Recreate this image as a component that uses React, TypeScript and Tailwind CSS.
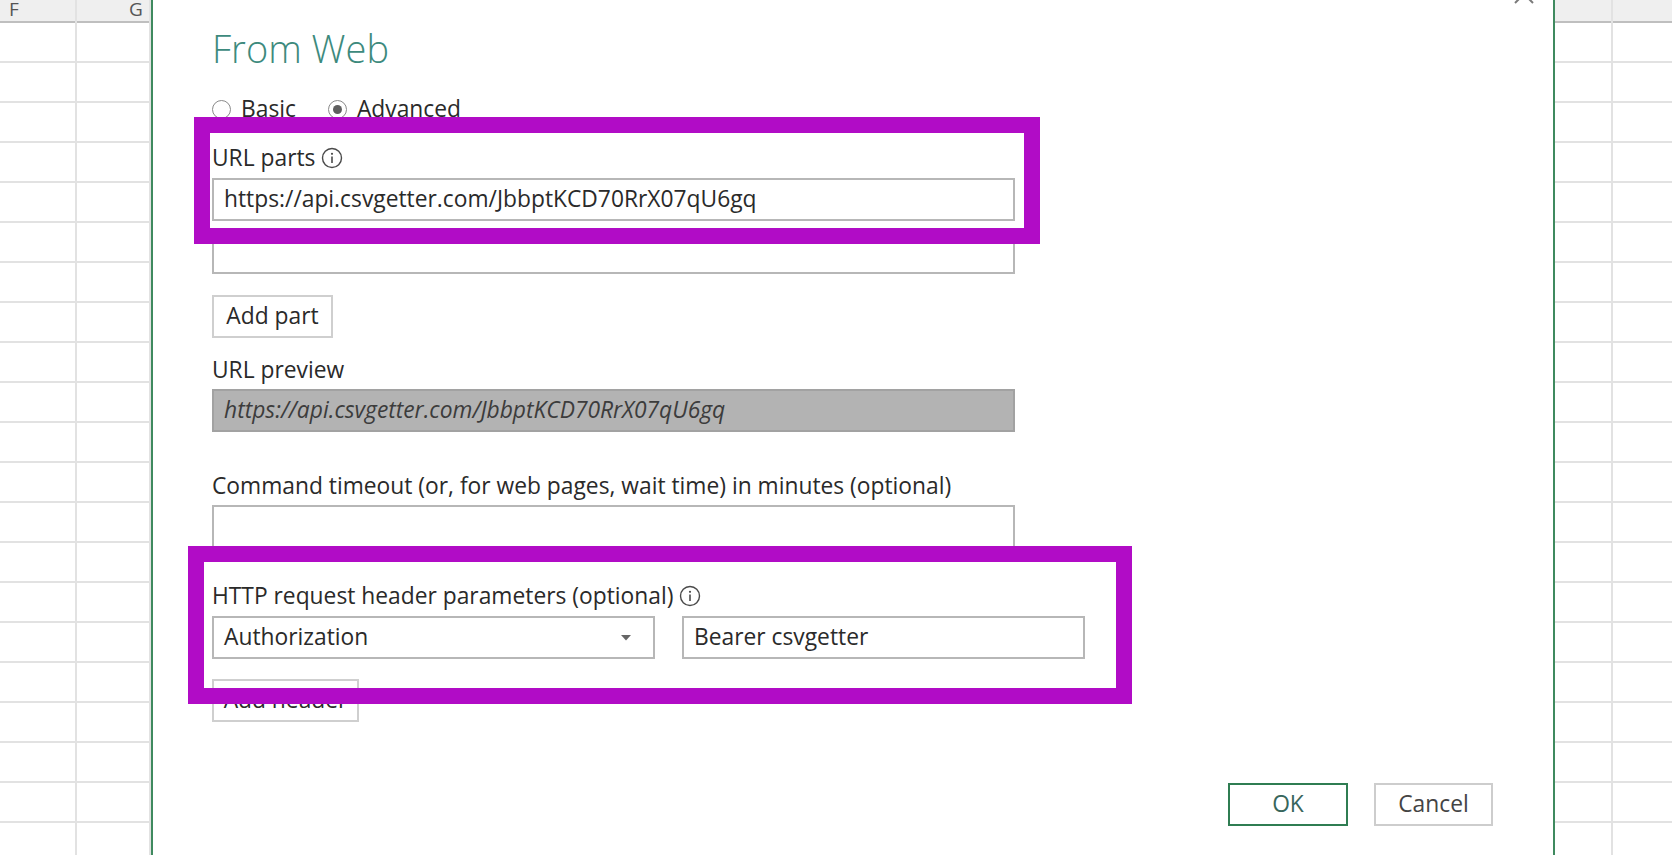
import React from "react";

const rows = Array.from({ length: 21 }, (_, i) => i);

function SheetStrip({ columns }: { columns: { label: string; width: string; pad: string }[] }) {
  return (
    <div className="flex shrink-0">
      {columns.map((col) => (
        <div key={col.label + col.width} className={`${col.width} border-r-2 border-[#e2e2e2]`}>
          <div className={`h-[23px] overflow-hidden border-b-2 border-[#bfbfbf] bg-[#efefef] text-[19px] leading-[19px] text-[#555] ${col.pad}`}>
            {col.label}
          </div>
          {rows.map((r) => (
            <div key={r} className="h-[40px] border-b-2 border-[#e2e2e2]" />
          ))}
        </div>
      ))}
    </div>
  );
}

function InfoIcon() {
  return (
    <svg width="22" height="22" viewBox="0 0 22 22" className="ml-[6px]">
      <circle cx="11" cy="11" r="9.5" fill="none" stroke="#4a4a4a" strokeWidth="1.4" />
      <circle cx="11" cy="6.8" r="1.1" fill="#4a4a4a" />
      <line x1="11" y1="9.5" x2="11" y2="16" stroke="#4a4a4a" strokeWidth="1.6" />
    </svg>
  );
}

function Radio({ checked, label }: { checked?: boolean; label: string }) {
  return (
    <div className="flex items-center">
      <span className="flex h-[19px] w-[19px] items-center justify-center rounded-full border-[1.5px] border-[#8a8a8a] bg-white">
        {checked && <span className="h-[9px] w-[9px] rounded-full bg-[#5f5f5f]" />}
      </span>
      <span className="ml-[10px]">{label}</span>
    </div>
  );
}

const inputCls = "h-[43px] border-2 border-[#b7b7b7] bg-white px-[10px] flex items-center";

export default function App() {
  return (
    <div className="flex h-[855px] w-[1672px] overflow-hidden bg-white font-['Open_Sans',sans-serif] text-[22.8px] text-[#2a2a2a]">
      <SheetStrip
        columns={[
          { label: "F", width: "w-[77px]", pad: "pl-[9px]" },
          { label: "G", width: "w-[74px]", pad: "pl-[52px]" },
        ]}
      />

      <div className="relative w-[1404px] shrink-0 border-x-2 border-[#3f8a5f] bg-white pl-[59px] pr-[60px]">
        {/* close glyph, mostly scrolled off the top */}
        <svg width="22" height="22" viewBox="0 0 22 22" className="absolute left-[1360px] top-[-17px]">
          <line x1="2" y1="2" x2="20" y2="20" stroke="#7a7a7a" strokeWidth="2" />
          <line x1="20" y1="2" x2="2" y2="20" stroke="#7a7a7a" strokeWidth="2" />
        </svg>

        <h1 className="mt-[25px] text-[38px] font-light leading-[46px] text-[#3d8a7d]">From Web</h1>

        <div className="mt-[23px] flex h-[30px] items-center gap-[32px]">
          <Radio label="Basic" />
          <Radio label="Advanced" checked />
        </div>

        <div className="mt-[19px] flex h-[30px] items-center">
          URL parts <InfoIcon />
        </div>
        <div className={`mt-[5px] w-[803px] ${inputCls}`}>https://api.csvgetter.com/JbbptKCD70RrX07qU6gq</div>
        <div className={`mt-[10px] w-[803px] ${inputCls}`} />

        <button className="mt-[21px] flex h-[43px] w-[121px] items-center justify-center border-2 border-[#cfcfcf] bg-white">
          Add part
        </button>

        <div className="mt-[17px] flex h-[30px] items-center">URL preview</div>
        <div className="mt-[4px] flex h-[43px] w-[803px] items-center border-2 border-[#a2a2a2] bg-[#b3b3b3] px-[10px] italic text-[#3c3c3c]">
          https://api.csvgetter.com/JbbptKCD70RrX07qU6gq
        </div>

        <div className="mt-[39px] flex h-[30px] items-center">
          Command timeout (or, for web pages, wait time) in minutes (optional)
        </div>
        <div className={`mt-[4px] w-[803px] ${inputCls}`} />

        <div className="mt-[33px] flex h-[30px] items-center">
          HTTP request header parameters (optional) <InfoIcon />
        </div>
        <div className="mt-[5px] flex gap-[27px]">
          <div className={`w-[443px] justify-between ${inputCls}`}>
            <span>Authorization</span>
            <svg width="10" height="6" viewBox="0 0 10 6" className="mr-[12px]">
              <path d="M0 0 L10 0 L5 5.5 Z" fill="#666" />
            </svg>
          </div>
          <div className={`w-[403px] ${inputCls}`}>Bearer csvgetter</div>
        </div>

        <button className="mt-[20px] flex h-[43px] w-[147px] items-center justify-center border-2 border-[#cfcfcf] bg-white">
          Add header
        </button>

        <div className="mt-[61px] flex justify-end gap-[26px]">
          <button className="flex h-[43px] w-[120px] items-center justify-center border-2 border-[#2f7d52] bg-white text-[#38665c]">
            OK
          </button>
          <button className="flex h-[43px] w-[119px] items-center justify-center border-2 border-[#cdcdcd] bg-white text-[#444]">
            Cancel
          </button>
        </div>

        {/* highlight annotations drawn over the dialog */}
        <div className="absolute left-[41px] top-[117px] h-[127px] w-[846px] border-[16px] border-[#b10cc6]" />
        <div className="absolute left-[35px] top-[546px] h-[158px] w-[944px] border-[16px] border-[#b10cc6]" />
      </div>

      <SheetStrip
        columns={[
          { label: "", width: "w-[58px]", pad: "" },
          { label: "", width: "w-[80px]", pad: "" },
        ]}
      />
    </div>
  );
}
